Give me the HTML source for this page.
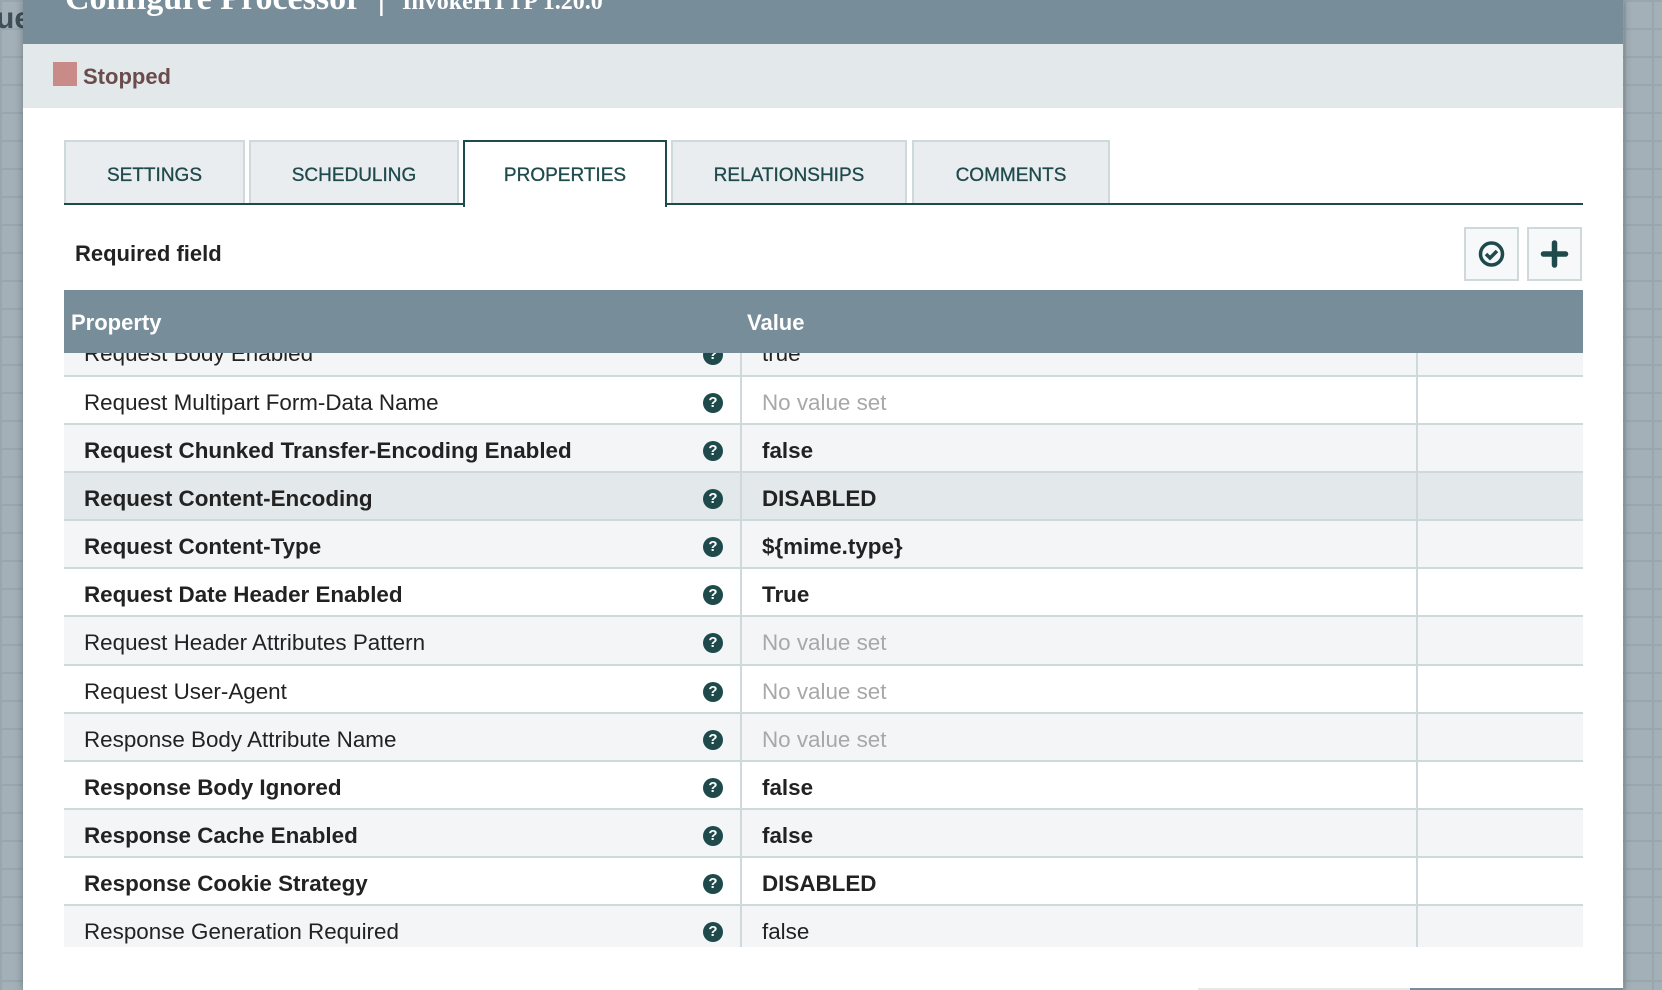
<!DOCTYPE html>
<html><head><meta charset="utf-8"><style>
*{box-sizing:border-box;margin:0;padding:0}
body{width:1662px;height:990px;overflow:hidden;background:#a3b0b8;font-family:"Liberation Sans",sans-serif;position:relative}
.grid{position:absolute;inset:0;background-image:linear-gradient(#98a6ae 2px,transparent 2px),linear-gradient(90deg,#98a6ae 2px,transparent 2px);background-size:28px 28px}
.dlg{position:absolute;left:23px;top:0;width:1600px;height:990px;background:#fff;box-shadow:0 0 8px rgba(0,0,0,.3)}
.hdr{position:absolute;left:0;top:0;width:1600px;height:44px;background:#778d9a;color:#fff}
.hdr span{position:absolute;left:42px;top:-20px;font:bold 34px "Liberation Serif",serif}
.stat{position:absolute;left:0;top:44px;width:1600px;height:64px;background:#e3e8eb}
.stat i{position:absolute;left:30px;top:18px;width:24px;height:24px;background:#c98b88}
.stat b{position:absolute;left:60px;top:20px;font-size:22px;color:#6b4c4c}
.tab{position:absolute;top:140px;height:65px;background:#e9edf0;border:2px solid #cfd9dc;border-bottom:none;color:#1e4a4c;font-size:19px;text-align:center;line-height:68px;-webkit-text-stroke:0.3px #1e4a4c}
.tab.a{background:#fff;border:2px solid #1e4a4c;border-bottom:none;height:67px}
.line{position:absolute;left:41px;top:203px;width:1519px;height:2px;background:#1e4a4c}
.req{position:absolute;left:52px;top:241px;font-size:22px;font-weight:bold;color:#222}
.btn{position:absolute;top:227px;width:55px;height:54px;border:2px solid #cfd9dc;background:#f6f8f9}
.th{position:absolute;left:41px;top:290px;width:1519px;height:63px;background:#778d9a;color:#fff;font-size:22px;font-weight:bold}
.tbl{position:absolute;left:41px;top:353px;width:1519px;height:594px;overflow:hidden}
.r{position:relative;height:48.1px;border-bottom:2px solid #cfd9dc;font-size:22.4px;color:#222}
.r .n{position:absolute;left:20px;top:13px}
.r .v{position:absolute;left:698px;top:13px}
.r .d1{position:absolute;left:676px;top:0;bottom:-2px;width:2px;background:#cfd9dc}
.r .d2{position:absolute;left:1352px;top:0;bottom:-2px;width:2px;background:#cfd9dc}
.r .q{position:absolute;left:639px;top:16px;width:20px;height:20px;border-radius:50%;background:#1e4a4c;color:#fff;font-size:15px;font-weight:bold;text-align:center;line-height:20px}
.w{background:#fff}.l{background:#f4f5f7}.h{background:#e3e8eb}
.b{font-weight:bold}.nv{color:#a8a8a8}
</style></head><body>
<div class="grid"></div>
<div style="position:absolute;left:-4px;top:2px;font:bold 30px 'Liberation Sans';color:#3d4f58">ue</div>
<div class="dlg">
<div class="hdr"><span>Configure Processor &nbsp;|&nbsp; <small style="font-size:24px">InvokeHTTP 1.20.0</small></span></div>
<div class="stat"><i></i><b>Stopped</b></div>
<div class="tab" style="left:41px;width:181px">SETTINGS</div>
<div class="tab" style="left:226px;width:210px">SCHEDULING</div>
<div class="tab a" style="left:440px;width:204px">PROPERTIES</div>
<div class="tab" style="left:648px;width:236px">RELATIONSHIPS</div>
<div class="tab" style="left:889px;width:198px">COMMENTS</div>
<div class="line"></div>
<div style="position:absolute;left:442px;top:203px;width:200px;height:2px;background:#fff"></div>
<div class="req">Required field</div>
<div class="btn" style="left:1441px"><svg width="51" height="50" viewBox="0 0 51 50"><circle cx="25.5" cy="25" r="11" fill="none" stroke="#1e4a4c" stroke-width="3.5"/><path d="M20 25l4 4 7-7" fill="none" stroke="#1e4a4c" stroke-width="3.5"/></svg></div>
<div class="btn" style="left:1504px"><svg width="51" height="50" viewBox="0 0 51 50"><path d="M25.5 14v22M14.5 25h22" stroke="#1e4a4c" stroke-width="5.5" stroke-linecap="round"/></svg></div>
<div class="th"><span style="position:absolute;left:7px;top:20px">Property</span><span style="position:absolute;left:683px;top:20px">Value</span></div>
<div class="tbl">
<div class="r l" style="height:24px"><span class="n" style="top:-12px">Request Body Enabled</span><span class="v" style="top:-12px">true</span><span class="q" style="top:-8px">?</span><i class="d1"></i><i class="d2"></i></div>
<div class="r w"><span class="n">Request Multipart Form-Data Name</span><span class="q">?</span><span class="v nv">No value set</span><i class="d1"></i><i class="d2"></i></div>
<div class="r l b"><span class="n">Request Chunked Transfer-Encoding Enabled</span><span class="q">?</span><span class="v">false</span><i class="d1"></i><i class="d2"></i></div>
<div class="r h b"><span class="n">Request Content-Encoding</span><span class="q">?</span><span class="v">DISABLED</span><i class="d1"></i><i class="d2"></i></div>
<div class="r l b"><span class="n">Request Content-Type</span><span class="q">?</span><span class="v">${mime.type}</span><i class="d1"></i><i class="d2"></i></div>
<div class="r w b"><span class="n">Request Date Header Enabled</span><span class="q">?</span><span class="v">True</span><i class="d1"></i><i class="d2"></i></div>
<div class="r l"><span class="n">Request Header Attributes Pattern</span><span class="q">?</span><span class="v nv">No value set</span><i class="d1"></i><i class="d2"></i></div>
<div class="r w"><span class="n">Request User-Agent</span><span class="q">?</span><span class="v nv">No value set</span><i class="d1"></i><i class="d2"></i></div>
<div class="r l"><span class="n">Response Body Attribute Name</span><span class="q">?</span><span class="v nv">No value set</span><i class="d1"></i><i class="d2"></i></div>
<div class="r w b"><span class="n">Response Body Ignored</span><span class="q">?</span><span class="v">false</span><i class="d1"></i><i class="d2"></i></div>
<div class="r l b"><span class="n">Response Cache Enabled</span><span class="q">?</span><span class="v">false</span><i class="d1"></i><i class="d2"></i></div>
<div class="r w b"><span class="n">Response Cookie Strategy</span><span class="q">?</span><span class="v">DISABLED</span><i class="d1"></i><i class="d2"></i></div>
<div class="r l" style="border-bottom:none"><span class="n">Response Generation Required</span><span class="q">?</span><span class="v">false</span><i class="d1"></i><i class="d2"></i></div>
</div>
<div style="position:absolute;left:1175px;top:988px;width:212px;height:2px;background:#e3e8eb"></div>
<div style="position:absolute;left:1387px;top:988px;width:213px;height:2px;background:#778d9a"></div>
</div>
</body></html>
